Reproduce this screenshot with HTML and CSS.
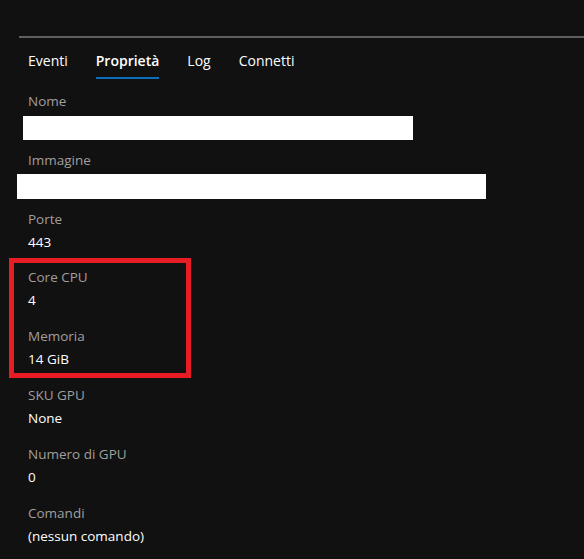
FILE: index.html
```html
<!DOCTYPE html>
<html lang="it">
<head>
  <meta charset="UTF-8">
  <title>Proprietà</title>
  <link rel="stylesheet" href="styles.css">
</head>
<body>
  <div class="panel">
    <div class="divider"></div>

    <nav class="tabs">
      <span class="tab">Eventi</span>
      <span class="tab active">Proprietà</span>
      <span class="tab">Log</span>
      <span class="tab">Connetti</span>
    </nav>

    <div class="props">
      <div class="field">
        <div class="label">Nome</div>
        <div class="redacted redacted-name"></div>
      </div>
      <div class="field">
        <div class="label">Immagine</div>
        <div class="redacted redacted-image"></div>
      </div>
      <div class="field">
        <div class="label">Porte</div>
        <div class="value">443</div>
      </div>

      <div class="highlight">
        <div class="field">
          <div class="label">Core CPU</div>
          <div class="value">4</div>
        </div>
        <div class="field">
          <div class="label">Memoria</div>
          <div class="value">14 GiB</div>
        </div>
      </div>

      <div class="field">
        <div class="label">SKU GPU</div>
        <div class="value">None</div>
      </div>
      <div class="field">
        <div class="label">Numero di GPU</div>
        <div class="value">0</div>
      </div>
      <div class="field">
        <div class="label">Comandi</div>
        <div class="value">(nessun comando)</div>
      </div>
    </div>
  </div>
</body>
</html>
```

FILE: styles.css
```css
body {
  margin: 0;
  background-color: #111111;
  color: #ffffff;
  font-family: "Open Sans", "Noto Sans", sans-serif;
  font-size: 13.5px;
}

.panel {
  padding-top: 36px;
  padding-left: 19px;
}

.divider {
  height: 2px;
  background-color: #5f5f5f;
}

.tabs {
  display: flex;
  gap: 28px;
  padding-left: 9px;
  margin-top: 13px;
}

.tab {
  color: #ffffff;
  font-size: 14px;
  line-height: 20px;
  padding: 0 0 6px;
  border-bottom: 2px solid transparent;
}

.tab.active {
  font-weight: 600;
  border-bottom-color: #0f6cbd;
}

.props {
  padding-top: 12px;
}

.field {
  padding-left: 9px;
  padding-bottom: 16px;
}

.label {
  color: #a19f9d;
  line-height: 20px;
}

.value {
  margin-top: 3px;
  line-height: 20px;
}

.redacted {
  background-color: #ffffff;
}

.field:has(.redacted) {
  padding-bottom: 10px;
}

.redacted-name {
  margin: 5px 0 0 -5px;
  width: 390px;
  height: 24px;
}

.redacted-image {
  margin: 4px 0 0 -11px;
  width: 469px;
  height: 25px;
}

.highlight {
  margin: -10px 0 7px -10px;
  width: 172px;
  border: 5px solid #e81c24;
  padding-top: 4px;
}

.highlight .field {
  padding-left: 14px;
}

.highlight .field:last-child {
  padding-bottom: 4px;
}
```
